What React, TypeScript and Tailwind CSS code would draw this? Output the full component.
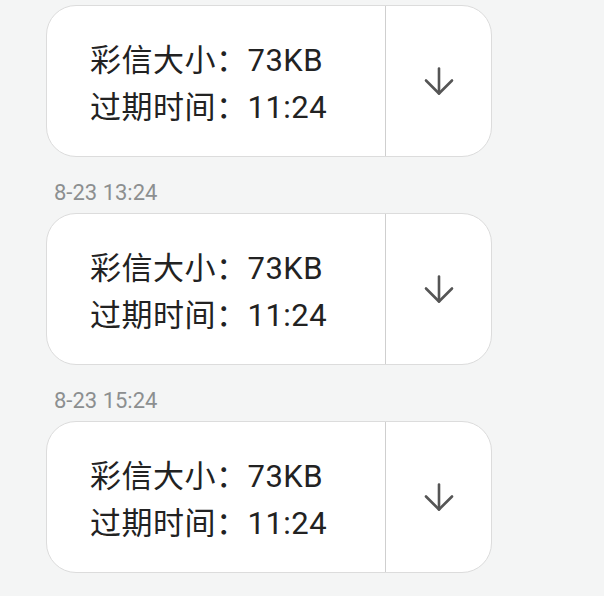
const items = [
  { time: null, size: "73KB", expire: "11:24" },
  { time: "8-23 13:24", size: "73KB", expire: "11:24" },
  { time: "8-23 15:24", size: "73KB", expire: "11:24" },
]

function DownArrow() {
  return (
    <svg width="30" height="30" viewBox="0 0 30 30" fill="none" stroke="#555" strokeWidth="2.6" strokeLinecap="round" strokeLinejoin="round">
      <path d="M15 2.5v25" />
      <path d="M2 14.5l13 13 13-13" />
    </svg>
  )
}

function MmsCard({ size, expire }: { size: string; expire: string }) {
  return (
    <div className="flex h-[152px] w-[446px] overflow-hidden rounded-[30px] border border-[#dcdcdc] bg-white">
      <div className="flex flex-1 flex-col justify-center pl-[43px] pt-[5px] text-[31px] leading-[47px] tracking-[0.5px] text-[#222]">
        <div>彩信大小：{size}</div>
        <div>过期时间：{expire}</div>
      </div>
      <div className="w-px bg-[#cfcfcf]" />
      <div className="flex w-[105px] items-center justify-center">
        <DownArrow />
      </div>
    </div>
  )
}

export default function App() {
  return (
    <div
      className="h-[596px] w-[604px] overflow-hidden bg-[#f4f5f5] pl-[46px] pt-[5px]"
      style={{ fontFamily: 'Roboto, "Noto Sans CJK SC", sans-serif' }}
    >
      {items.map((it, i) => (
        <div key={i}>
          {it.time && (
            <div className="pb-[6px] pl-[8px] pt-[22px] text-[22px] leading-[28px] text-[#8c8f90]">{it.time}</div>
          )}
          <MmsCard size={it.size} expire={it.expire} />
        </div>
      ))}
    </div>
  )
}
